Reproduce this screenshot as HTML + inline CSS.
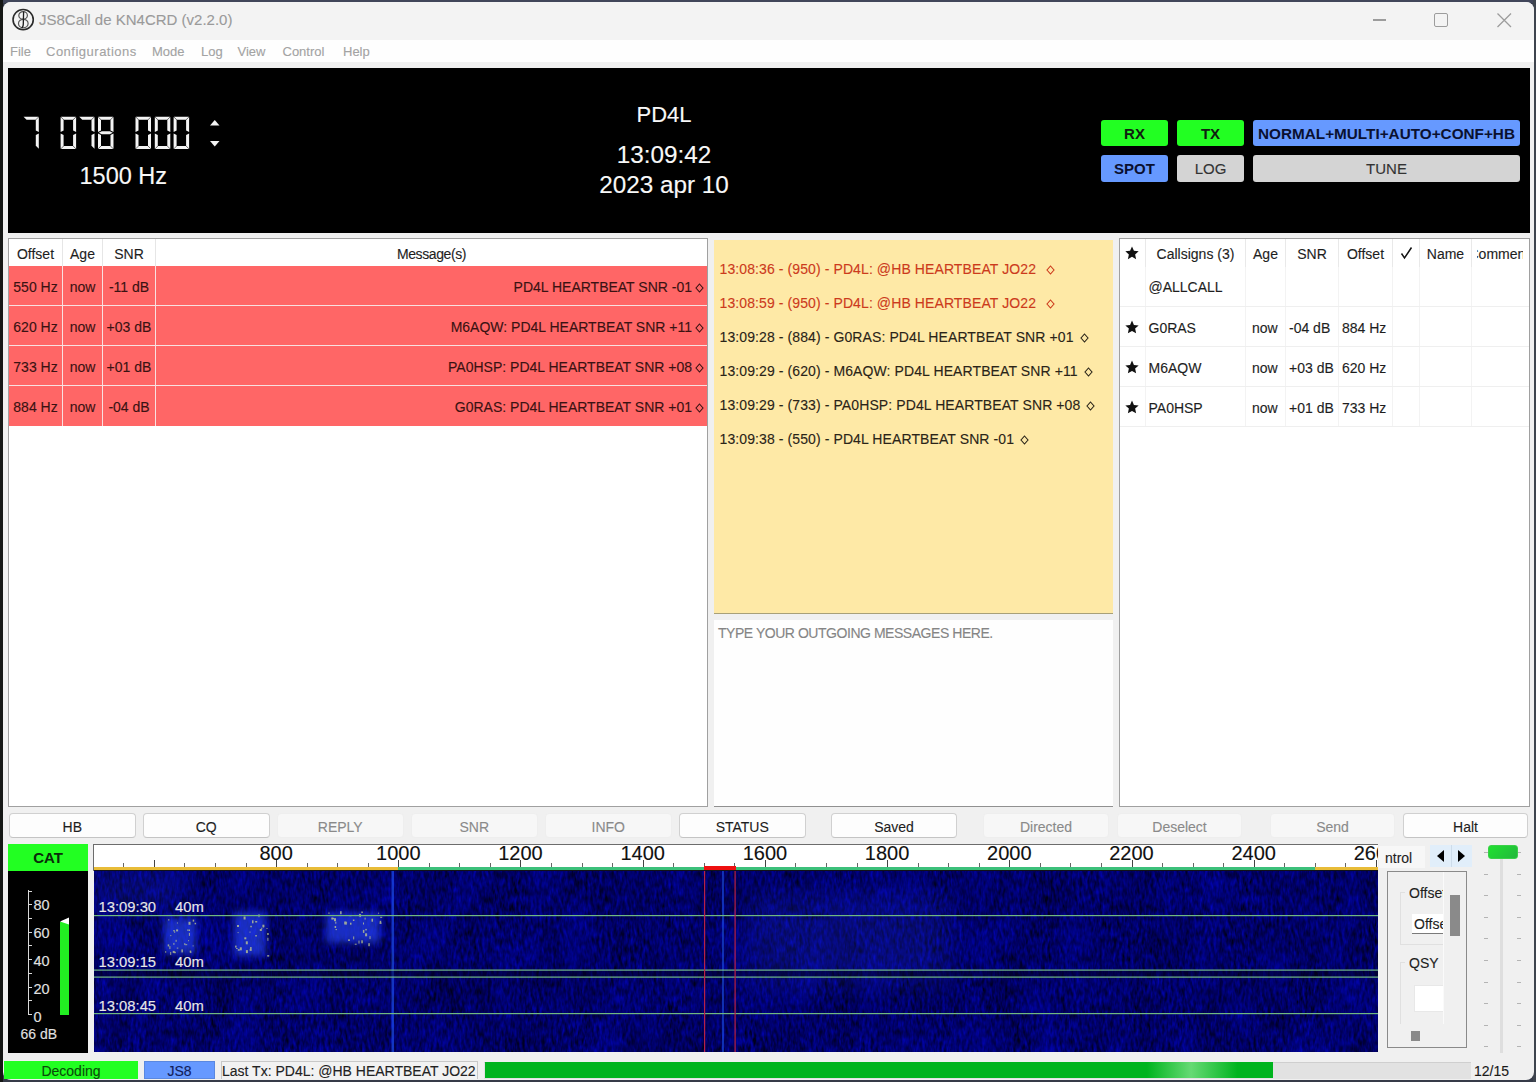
<!DOCTYPE html>
<html><head><meta charset="utf-8">
<style>
*{box-sizing:border-box;margin:0;padding:0}
html,body{width:1536px;height:1082px;overflow:hidden;background:#363b48;font-family:"Liberation Sans",sans-serif}
.a{position:absolute}
.t{position:absolute;white-space:nowrap;font-size:14px;line-height:20px;color:#1e1e1e;-webkit-text-stroke:0.12px currentColor}
</style></head><body>

<div class="a" style="left:0px;top:0px;width:1536px;height:3px;background:#41465a"></div>
<div class="a" style="left:0px;top:0px;width:3px;height:1082px;background:#151715"></div>
<div class="a" style="left:1533px;top:0px;width:3px;height:1082px;background:#3e444e"></div>
<div class="a" style="left:3px;top:2px;width:1531px;height:1078px;background:#f0f0f0;border-radius:8px;overflow:hidden">
<div class="a" style="left:0;top:0;width:1531px;height:38px;background:#f3f3f3"></div>
<div class="a" style="left:0;top:38px;width:1531px;height:22px;background:#fefefe"></div>
</div>
<svg class="a" style="left:8px;top:5px" width="30" height="30" viewBox="0 0 30 30">
<circle cx="15.15" cy="14.65" r="10.1" fill="none" stroke="#2a2a2a" stroke-width="1.6"/>
<ellipse cx="15.1" cy="10.4" rx="4.3" ry="3.7" fill="none" stroke="#555" stroke-width="1.2"/>
<ellipse cx="15.3" cy="18.6" rx="4.8" ry="4.3" fill="none" stroke="#555" stroke-width="1.2"/>
<path d="M15.6 6.6 L15.3 19 C15.2 21.5 14.8 22.5 13.6 23" fill="none" stroke="#1e1e1e" stroke-width="1.3"/>
</svg>
<div class="t" style="left:39px;top:10.27px;font-size:15px;line-height:20px;color:#9a9a9a;font-weight:400;">JS8Call de KN4CRD (v2.2.0)</div>
<div class="a" style="left:1373px;top:19px;width:13px;height:2px;background:#9c9c9c"></div>
<div class="a" style="left:1434px;top:13px;width:14px;height:14px;border:1.5px solid #9c9c9c;border-radius:2px"></div>
<svg class="a" style="left:1496px;top:12px" width="17" height="17" viewBox="0 0 17 17">
<path d="M1.5 1.5 L15 15 M15 1.5 L1.5 15" stroke="#9c9c9c" stroke-width="1.3"/></svg>
<div class="t" style="left:10px;top:42.03px;font-size:13px;line-height:20px;color:#a3a3a3;font-weight:400;">File</div>
<div class="t" style="left:46px;top:42.03px;font-size:13px;line-height:20px;color:#a3a3a3;font-weight:400;letter-spacing:0.5px">Configurations</div>
<div class="t" style="left:152px;top:42.03px;font-size:13px;line-height:20px;color:#a3a3a3;font-weight:400;">Mode</div>
<div class="t" style="left:201px;top:42.03px;font-size:13px;line-height:20px;color:#a3a3a3;font-weight:400;">Log</div>
<div class="t" style="left:237.5px;top:42.03px;font-size:13px;line-height:20px;color:#a3a3a3;font-weight:400;">View</div>
<div class="t" style="left:282.5px;top:42.03px;font-size:13px;line-height:20px;color:#a3a3a3;font-weight:400;">Control</div>
<div class="t" style="left:343px;top:42.03px;font-size:13px;line-height:20px;color:#a3a3a3;font-weight:400;">Help</div>
<div class="a" style="left:8px;top:68px;width:1522px;height:165px;background:#000"></div>
<svg class="a" style="left:0;top:0" width="240" height="200" viewBox="0 0 240 200"><g fill="#f4f4f4"><g transform="translate(23.3,116.7)"><polygon points="0.25,0.00 15.25,0.00 12.25,3.00 3.25,3.00"/><polygon points="15.50,0.25 12.50,3.25 12.50,13.85 15.50,15.35"/><polygon points="15.50,16.85 12.50,18.35 12.50,28.95 15.50,31.95"/></g><g transform="translate(60.6,116.7)"><polygon points="0.25,0.00 15.25,0.00 12.25,3.00 3.25,3.00"/><polygon points="15.50,0.25 12.50,3.25 12.50,13.85 15.50,15.35"/><polygon points="15.50,16.85 12.50,18.35 12.50,28.95 15.50,31.95"/><polygon points="0.25,32.20 15.25,32.20 12.25,29.20 3.25,29.20"/><polygon points="0.00,16.85 3.00,18.35 3.00,28.95 0.00,31.95"/><polygon points="0.00,0.25 3.00,3.25 3.00,13.85 0.00,15.35"/></g><g transform="translate(79,116.7)"><polygon points="0.25,0.00 15.25,0.00 12.25,3.00 3.25,3.00"/><polygon points="15.50,0.25 12.50,3.25 12.50,13.85 15.50,15.35"/><polygon points="15.50,16.85 12.50,18.35 12.50,28.95 15.50,31.95"/></g><g transform="translate(98,116.7)"><polygon points="0.25,0.00 15.25,0.00 12.25,3.00 3.25,3.00"/><polygon points="15.50,0.25 12.50,3.25 12.50,13.85 15.50,15.35"/><polygon points="15.50,16.85 12.50,18.35 12.50,28.95 15.50,31.95"/><polygon points="0.25,32.20 15.25,32.20 12.25,29.20 3.25,29.20"/><polygon points="0.00,16.85 3.00,18.35 3.00,28.95 0.00,31.95"/><polygon points="0.00,0.25 3.00,3.25 3.00,13.85 0.00,15.35"/><polygon points="0.75,16.10 3.75,14.60 11.75,14.60 14.75,16.10 11.75,17.60 3.75,17.60"/></g><g transform="translate(135.5,116.7)"><polygon points="0.25,0.00 15.25,0.00 12.25,3.00 3.25,3.00"/><polygon points="15.50,0.25 12.50,3.25 12.50,13.85 15.50,15.35"/><polygon points="15.50,16.85 12.50,18.35 12.50,28.95 15.50,31.95"/><polygon points="0.25,32.20 15.25,32.20 12.25,29.20 3.25,29.20"/><polygon points="0.00,16.85 3.00,18.35 3.00,28.95 0.00,31.95"/><polygon points="0.00,0.25 3.00,3.25 3.00,13.85 0.00,15.35"/></g><g transform="translate(154.8,116.7)"><polygon points="0.25,0.00 15.25,0.00 12.25,3.00 3.25,3.00"/><polygon points="15.50,0.25 12.50,3.25 12.50,13.85 15.50,15.35"/><polygon points="15.50,16.85 12.50,18.35 12.50,28.95 15.50,31.95"/><polygon points="0.25,32.20 15.25,32.20 12.25,29.20 3.25,29.20"/><polygon points="0.00,16.85 3.00,18.35 3.00,28.95 0.00,31.95"/><polygon points="0.00,0.25 3.00,3.25 3.00,13.85 0.00,15.35"/></g><g transform="translate(173.6,116.7)"><polygon points="0.25,0.00 15.25,0.00 12.25,3.00 3.25,3.00"/><polygon points="15.50,0.25 12.50,3.25 12.50,13.85 15.50,15.35"/><polygon points="15.50,16.85 12.50,18.35 12.50,28.95 15.50,31.95"/><polygon points="0.25,32.20 15.25,32.20 12.25,29.20 3.25,29.20"/><polygon points="0.00,16.85 3.00,18.35 3.00,28.95 0.00,31.95"/><polygon points="0.00,0.25 3.00,3.25 3.00,13.85 0.00,15.35"/></g><polygon points="210,125.5 219.5,125.5 214.75,120"/><polygon points="210,141 219.5,141 214.75,146.5"/></g></svg>
<div class="t" style="left:79.5px;top:166.42px;font-size:23.5px;line-height:20px;color:#f8f8f8;font-weight:400;">1500 Hz</div>
<div class="t" style="left:564px;width:200px;text-align:center;top:104.70px;font-size:22px;line-height:20px;color:#f8f8f8;font-weight:400;">PD4L</div>
<div class="t" style="left:564px;width:200px;text-align:center;top:145.24px;font-size:24.3px;line-height:20px;color:#f8f8f8;font-weight:400;">13:09:42</div>
<div class="t" style="left:564px;width:200px;text-align:center;top:174.74px;font-size:24.3px;line-height:20px;color:#f8f8f8;font-weight:400;">2023 apr 10</div>
<div class="a" style="left:1101px;top:120px;width:67px;height:26px;background:#22ff22;border-radius:3px"></div>
<div class="t" style="left:1101px;width:67px;text-align:center;top:123.77px;font-size:15px;line-height:20px;color:#102010;font-weight:700;-webkit-text-stroke:0;">RX</div>
<div class="a" style="left:1177px;top:120px;width:67px;height:26px;background:#22ff22;border-radius:3px"></div>
<div class="t" style="left:1177px;width:67px;text-align:center;top:123.77px;font-size:15px;line-height:20px;color:#102010;font-weight:700;-webkit-text-stroke:0;">TX</div>
<div class="a" style="left:1253px;top:120px;width:267px;height:26px;background:#6699ff;border-radius:3px"></div>
<div class="t" style="left:1253px;width:267px;text-align:center;top:123.78px;font-size:15.3px;line-height:20px;color:#0a1030;font-weight:700;-webkit-text-stroke:0;">NORMAL+MULTI+AUTO+CONF+HB</div>
<div class="a" style="left:1101px;top:155px;width:67px;height:27px;background:#6699ff;border-radius:3px"></div>
<div class="t" style="left:1101px;width:67px;text-align:center;top:159.27px;font-size:15px;line-height:20px;color:#0a1030;font-weight:700;-webkit-text-stroke:0;">SPOT</div>
<div class="a" style="left:1177px;top:155px;width:67px;height:27px;background:#d4d4d4;border-radius:3px"></div>
<div class="t" style="left:1177px;width:67px;text-align:center;top:159.27px;font-size:15px;line-height:20px;color:#333333;font-weight:400;">LOG</div>
<div class="a" style="left:1253px;top:155px;width:267px;height:27px;background:#d4d4d4;border-radius:3px"></div>
<div class="t" style="left:1253px;width:267px;text-align:center;top:159.27px;font-size:15px;line-height:20px;color:#333333;font-weight:400;">TUNE</div>
<div class="a" style="left:8px;top:238px;width:700px;height:569px;background:#fff;border:1px solid #a0a0a0"></div>
<div class="a" style="left:62px;top:239px;width:1px;height:27px;background:#e6e6e6"></div>
<div class="a" style="left:102px;top:239px;width:1px;height:27px;background:#e6e6e6"></div>
<div class="a" style="left:155px;top:239px;width:1px;height:27px;background:#e6e6e6"></div>
<div class="t" style="left:9px;width:53px;text-align:center;top:243.55px;font-size:14px;line-height:20px;color:#1e1e1e;font-weight:400;">Offset</div>
<div class="t" style="left:63px;width:39px;text-align:center;top:243.55px;font-size:14px;line-height:20px;color:#1e1e1e;font-weight:400;">Age</div>
<div class="t" style="left:103px;width:52px;text-align:center;top:243.55px;font-size:14px;line-height:20px;color:#1e1e1e;font-weight:400;">SNR</div>
<div class="t" style="left:156px;width:551px;text-align:center;top:243.55px;font-size:14px;line-height:20px;color:#1e1e1e;font-weight:400;letter-spacing:-0.39px">Message(s)</div>
<div class="a" style="left:9px;top:266px;width:698px;height:160px;background:#ff6666"></div>
<div class="a" style="left:9px;top:305px;width:698px;height:1px;background:#f8e0e0"></div>
<div class="a" style="left:9px;top:345px;width:698px;height:1px;background:#f8e0e0"></div>
<div class="a" style="left:9px;top:385px;width:698px;height:1px;background:#f8e0e0"></div>
<div class="a" style="left:62px;top:266px;width:1px;height:160px;background:#f8e0e0"></div>
<div class="a" style="left:102px;top:266px;width:1px;height:160px;background:#f8e0e0"></div>
<div class="a" style="left:155px;top:266px;width:1px;height:160px;background:#f8e0e0"></div>
<div class="t" style="left:9px;width:53px;text-align:center;top:277.25px;font-size:14px;line-height:20px;color:#3a1212;font-weight:400;">550 Hz</div>
<div class="t" style="left:63px;width:39px;text-align:center;top:277.25px;font-size:14px;line-height:20px;color:#3a1212;font-weight:400;">now</div>
<div class="t" style="left:103px;width:52px;text-align:center;top:277.25px;font-size:14px;line-height:20px;color:#3a1212;font-weight:400;">-11 dB</div>
<div class="t" style="right:844px;top:277.25px;font-size:14px;line-height:20px;color:#3a1212;font-weight:400;text-align:right;">PD4L HEARTBEAT SNR -01</div>
<svg class="a" style="left:694.5px;top:282.5px" width="9" height="10" viewBox="0 0 9 10"><path d="M4.5 1 L8 5 L4.5 9 L1 5 Z" fill="none" stroke="#3a1212" stroke-width="1.1"/></svg>
<div class="t" style="left:9px;width:53px;text-align:center;top:317.25px;font-size:14px;line-height:20px;color:#3a1212;font-weight:400;">620 Hz</div>
<div class="t" style="left:63px;width:39px;text-align:center;top:317.25px;font-size:14px;line-height:20px;color:#3a1212;font-weight:400;">now</div>
<div class="t" style="left:103px;width:52px;text-align:center;top:317.25px;font-size:14px;line-height:20px;color:#3a1212;font-weight:400;">+03 dB</div>
<div class="t" style="right:844px;top:317.25px;font-size:14px;line-height:20px;color:#3a1212;font-weight:400;text-align:right;">M6AQW: PD4L HEARTBEAT SNR +11</div>
<svg class="a" style="left:694.5px;top:322.5px" width="9" height="10" viewBox="0 0 9 10"><path d="M4.5 1 L8 5 L4.5 9 L1 5 Z" fill="none" stroke="#3a1212" stroke-width="1.1"/></svg>
<div class="t" style="left:9px;width:53px;text-align:center;top:357.25px;font-size:14px;line-height:20px;color:#3a1212;font-weight:400;">733 Hz</div>
<div class="t" style="left:63px;width:39px;text-align:center;top:357.25px;font-size:14px;line-height:20px;color:#3a1212;font-weight:400;">now</div>
<div class="t" style="left:103px;width:52px;text-align:center;top:357.25px;font-size:14px;line-height:20px;color:#3a1212;font-weight:400;">+01 dB</div>
<div class="t" style="right:844px;top:357.25px;font-size:14px;line-height:20px;color:#3a1212;font-weight:400;text-align:right;">PA0HSP: PD4L HEARTBEAT SNR +08</div>
<svg class="a" style="left:694.5px;top:362.5px" width="9" height="10" viewBox="0 0 9 10"><path d="M4.5 1 L8 5 L4.5 9 L1 5 Z" fill="none" stroke="#3a1212" stroke-width="1.1"/></svg>
<div class="t" style="left:9px;width:53px;text-align:center;top:397.25px;font-size:14px;line-height:20px;color:#3a1212;font-weight:400;">884 Hz</div>
<div class="t" style="left:63px;width:39px;text-align:center;top:397.25px;font-size:14px;line-height:20px;color:#3a1212;font-weight:400;">now</div>
<div class="t" style="left:103px;width:52px;text-align:center;top:397.25px;font-size:14px;line-height:20px;color:#3a1212;font-weight:400;">-04 dB</div>
<div class="t" style="right:844px;top:397.25px;font-size:14px;line-height:20px;color:#3a1212;font-weight:400;text-align:right;">G0RAS: PD4L HEARTBEAT SNR +01</div>
<svg class="a" style="left:694.5px;top:402.5px" width="9" height="10" viewBox="0 0 9 10"><path d="M4.5 1 L8 5 L4.5 9 L1 5 Z" fill="none" stroke="#3a1212" stroke-width="1.1"/></svg>
<div class="a" style="left:714px;top:240px;width:399px;height:374px;background:#fee9a6;border-bottom:1px solid #a8a078"></div>
<div class="a" style="left:714px;top:620px;width:399px;height:187px;background:#fefefe;border-bottom:1px solid #909090"></div>
<div class="t" style="left:719.5px;top:258.65px;font-size:14px;line-height:20px;color:#cc3a1c;font-weight:400;letter-spacing:0.1px">13:08:36 - (950) - PD4L: @HB HEARTBEAT JO22<svg style="display:inline-block;vertical-align:-1px;margin-left:10px" width="9" height="10" viewBox="0 0 9 10"><path d="M4.5 1 L8 5 L4.5 9 L1 5 Z" fill="none" stroke="#cc3a1c" stroke-width="1.1"/></svg></div>
<div class="t" style="left:719.5px;top:292.65px;font-size:14px;line-height:20px;color:#cc3a1c;font-weight:400;letter-spacing:0.1px">13:08:59 - (950) - PD4L: @HB HEARTBEAT JO22<svg style="display:inline-block;vertical-align:-1px;margin-left:10px" width="9" height="10" viewBox="0 0 9 10"><path d="M4.5 1 L8 5 L4.5 9 L1 5 Z" fill="none" stroke="#cc3a1c" stroke-width="1.1"/></svg></div>
<div class="t" style="left:719.5px;top:326.65px;font-size:14px;line-height:20px;color:#2a2418;font-weight:400;letter-spacing:0.1px">13:09:28 - (884) - G0RAS: PD4L HEARTBEAT SNR +01<svg style="display:inline-block;vertical-align:-1px;margin-left:6px" width="9" height="10" viewBox="0 0 9 10"><path d="M4.5 1 L8 5 L4.5 9 L1 5 Z" fill="none" stroke="#2a2418" stroke-width="1.1"/></svg></div>
<div class="t" style="left:719.5px;top:360.65px;font-size:14px;line-height:20px;color:#2a2418;font-weight:400;letter-spacing:0.1px">13:09:29 - (620) - M6AQW: PD4L HEARTBEAT SNR +11<svg style="display:inline-block;vertical-align:-1px;margin-left:6px" width="9" height="10" viewBox="0 0 9 10"><path d="M4.5 1 L8 5 L4.5 9 L1 5 Z" fill="none" stroke="#2a2418" stroke-width="1.1"/></svg></div>
<div class="t" style="left:719.5px;top:394.65px;font-size:14px;line-height:20px;color:#2a2418;font-weight:400;letter-spacing:0.1px">13:09:29 - (733) - PA0HSP: PD4L HEARTBEAT SNR +08<svg style="display:inline-block;vertical-align:-1px;margin-left:6px" width="9" height="10" viewBox="0 0 9 10"><path d="M4.5 1 L8 5 L4.5 9 L1 5 Z" fill="none" stroke="#2a2418" stroke-width="1.1"/></svg></div>
<div class="t" style="left:719.5px;top:428.65px;font-size:14px;line-height:20px;color:#2a2418;font-weight:400;letter-spacing:0.1px">13:09:38 - (550) - PD4L HEARTBEAT SNR -01<svg style="display:inline-block;vertical-align:-1px;margin-left:6px" width="9" height="10" viewBox="0 0 9 10"><path d="M4.5 1 L8 5 L4.5 9 L1 5 Z" fill="none" stroke="#2a2418" stroke-width="1.1"/></svg></div>
<div class="t" style="left:718px;top:622.85px;font-size:14px;line-height:20px;color:#858585;font-weight:400;letter-spacing:-0.46px">TYPE YOUR OUTGOING MESSAGES HERE.</div>
<div class="a" style="left:1119px;top:238px;width:411px;height:569px;background:#fff;border:1px solid #a0a0a0"></div>
<div class="a" style="left:1145px;top:239px;width:1px;height:28px;background:#e9e9e9"></div>
<div class="a" style="left:1145px;top:267px;width:1px;height:160px;background:#f3f3f3"></div>
<div class="a" style="left:1245px;top:239px;width:1px;height:28px;background:#e9e9e9"></div>
<div class="a" style="left:1245px;top:267px;width:1px;height:160px;background:#f3f3f3"></div>
<div class="a" style="left:1285px;top:239px;width:1px;height:28px;background:#e9e9e9"></div>
<div class="a" style="left:1285px;top:267px;width:1px;height:160px;background:#f3f3f3"></div>
<div class="a" style="left:1338px;top:239px;width:1px;height:28px;background:#e9e9e9"></div>
<div class="a" style="left:1338px;top:267px;width:1px;height:160px;background:#f3f3f3"></div>
<div class="a" style="left:1392px;top:239px;width:1px;height:28px;background:#e9e9e9"></div>
<div class="a" style="left:1392px;top:267px;width:1px;height:160px;background:#f3f3f3"></div>
<div class="a" style="left:1419px;top:239px;width:1px;height:28px;background:#e9e9e9"></div>
<div class="a" style="left:1419px;top:267px;width:1px;height:160px;background:#f3f3f3"></div>
<div class="a" style="left:1471px;top:239px;width:1px;height:28px;background:#e9e9e9"></div>
<div class="a" style="left:1471px;top:267px;width:1px;height:160px;background:#f3f3f3"></div>
<div class="a" style="left:1120px;top:306px;width:409px;height:1px;background:#efefef"></div>
<div class="a" style="left:1120px;top:346px;width:409px;height:1px;background:#efefef"></div>
<div class="a" style="left:1120px;top:386px;width:409px;height:1px;background:#efefef"></div>
<div class="a" style="left:1120px;top:426px;width:409px;height:1px;background:#efefef"></div>
<svg class="a" style="left:0;top:0;overflow:visible" width="1" height="1"><polygon points="1132.00,246.50 1133.93,250.84 1138.66,251.34 1135.13,254.52 1136.11,259.16 1132.00,256.79 1127.89,259.16 1128.87,254.52 1125.34,251.34 1130.07,250.84" fill="#111"/></svg>
<div class="t" style="left:1146px;width:99px;text-align:center;top:243.55px;font-size:14px;line-height:20px;color:#1e1e1e;font-weight:400;">Callsigns (3)</div>
<div class="t" style="left:1246px;width:39px;text-align:center;top:243.55px;font-size:14px;line-height:20px;color:#1e1e1e;font-weight:400;">Age</div>
<div class="t" style="left:1286px;width:52px;text-align:center;top:243.55px;font-size:14px;line-height:20px;color:#1e1e1e;font-weight:400;">SNR</div>
<div class="t" style="left:1339px;width:53px;text-align:center;top:243.55px;font-size:14px;line-height:20px;color:#1e1e1e;font-weight:400;">Offset</div>
<svg class="a" style="left:1400px;top:246px" width="13" height="14" viewBox="0 0 13 14"><path d="M1.5 7.5 L4.5 12 L11.5 1.5" fill="none" stroke="#111" stroke-width="1.5"/></svg>
<div class="t" style="left:1420px;width:51px;text-align:center;top:243.55px;font-size:14px;line-height:20px;color:#1e1e1e;font-weight:400;">Name</div>
<div class="a" style="left:1476.5px;top:239px;width:46.5px;height:28px;overflow:hidden">
<div class="t" style="left:-8px;top:4.55px;">Comment</div>
</div>
<div class="t" style="left:1148.5px;top:277.25px;font-size:14px;line-height:20px;color:#1e1e1e;font-weight:400;">@ALLCALL</div>
<svg class="a" style="left:0;top:0;overflow:visible" width="1" height="1"><polygon points="1132.00,320.60 1133.93,324.94 1138.66,325.44 1135.13,328.62 1136.11,333.26 1132.00,330.89 1127.89,333.26 1128.87,328.62 1125.34,325.44 1130.07,324.94" fill="#111"/></svg>
<div class="t" style="left:1148.5px;top:317.85px;font-size:14px;line-height:20px;color:#1e1e1e;font-weight:400;">G0RAS</div>
<div class="t" style="left:1252px;top:317.85px;font-size:14px;line-height:20px;color:#1e1e1e;font-weight:400;">now</div>
<div class="t" style="left:1289px;top:317.85px;font-size:14px;line-height:20px;color:#1e1e1e;font-weight:400;">-04 dB</div>
<div class="t" style="left:1342px;top:317.85px;font-size:14px;line-height:20px;color:#1e1e1e;font-weight:400;">884 Hz</div>
<svg class="a" style="left:0;top:0;overflow:visible" width="1" height="1"><polygon points="1132.00,360.60 1133.93,364.94 1138.66,365.44 1135.13,368.62 1136.11,373.26 1132.00,370.89 1127.89,373.26 1128.87,368.62 1125.34,365.44 1130.07,364.94" fill="#111"/></svg>
<div class="t" style="left:1148.5px;top:357.85px;font-size:14px;line-height:20px;color:#1e1e1e;font-weight:400;">M6AQW</div>
<div class="t" style="left:1252px;top:357.85px;font-size:14px;line-height:20px;color:#1e1e1e;font-weight:400;">now</div>
<div class="t" style="left:1289px;top:357.85px;font-size:14px;line-height:20px;color:#1e1e1e;font-weight:400;">+03 dB</div>
<div class="t" style="left:1342px;top:357.85px;font-size:14px;line-height:20px;color:#1e1e1e;font-weight:400;">620 Hz</div>
<svg class="a" style="left:0;top:0;overflow:visible" width="1" height="1"><polygon points="1132.00,400.60 1133.93,404.94 1138.66,405.44 1135.13,408.62 1136.11,413.26 1132.00,410.89 1127.89,413.26 1128.87,408.62 1125.34,405.44 1130.07,404.94" fill="#111"/></svg>
<div class="t" style="left:1148.5px;top:397.85px;font-size:14px;line-height:20px;color:#1e1e1e;font-weight:400;">PA0HSP</div>
<div class="t" style="left:1252px;top:397.85px;font-size:14px;line-height:20px;color:#1e1e1e;font-weight:400;">now</div>
<div class="t" style="left:1289px;top:397.85px;font-size:14px;line-height:20px;color:#1e1e1e;font-weight:400;">+01 dB</div>
<div class="t" style="left:1342px;top:397.85px;font-size:14px;line-height:20px;color:#1e1e1e;font-weight:400;">733 Hz</div>
<div class="a" style="left:9px;top:813px;width:126.5px;height:25px;background:#fdfdfd;border:1px solid #d0d0d0;border-bottom-color:#c4c4c4;border-radius:4px"></div>
<div class="t" style="left:9px;width:126.5px;text-align:center;top:816.85px;font-size:14px;line-height:20px;color:#1e1e1e;font-weight:400;">HB</div>
<div class="a" style="left:143px;top:813px;width:126.5px;height:25px;background:#fdfdfd;border:1px solid #d0d0d0;border-bottom-color:#c4c4c4;border-radius:4px"></div>
<div class="t" style="left:143px;width:126.5px;text-align:center;top:816.85px;font-size:14px;line-height:20px;color:#1e1e1e;font-weight:400;">CQ</div>
<div class="a" style="left:277px;top:813px;width:126.5px;height:25px;background:#f7f7f7;border:1px solid #eeeeee;border-radius:4px"></div>
<div class="t" style="left:277px;width:126.5px;text-align:center;top:816.75px;font-size:14px;line-height:20px;color:#8a8a8a;font-weight:400;">REPLY</div>
<div class="a" style="left:411px;top:813px;width:126.5px;height:25px;background:#f7f7f7;border:1px solid #eeeeee;border-radius:4px"></div>
<div class="t" style="left:411px;width:126.5px;text-align:center;top:816.75px;font-size:14px;line-height:20px;color:#8a8a8a;font-weight:400;">SNR</div>
<div class="a" style="left:545px;top:813px;width:126.5px;height:25px;background:#f7f7f7;border:1px solid #eeeeee;border-radius:4px"></div>
<div class="t" style="left:545px;width:126.5px;text-align:center;top:816.75px;font-size:14px;line-height:20px;color:#8a8a8a;font-weight:400;">INFO</div>
<div class="a" style="left:679px;top:813px;width:126.5px;height:25px;background:#fdfdfd;border:1px solid #d0d0d0;border-bottom-color:#c4c4c4;border-radius:4px"></div>
<div class="t" style="left:679px;width:126.5px;text-align:center;top:816.85px;font-size:14px;line-height:20px;color:#1e1e1e;font-weight:400;">STATUS</div>
<div class="a" style="left:831px;top:813px;width:126px;height:25px;background:#fdfdfd;border:1px solid #d0d0d0;border-bottom-color:#c4c4c4;border-radius:4px"></div>
<div class="t" style="left:831px;width:126px;text-align:center;top:816.85px;font-size:14px;line-height:20px;color:#1e1e1e;font-weight:400;">Saved</div>
<div class="a" style="left:983px;top:813px;width:126px;height:25px;background:#f7f7f7;border:1px solid #eeeeee;border-radius:4px"></div>
<div class="t" style="left:983px;width:126px;text-align:center;top:816.75px;font-size:14px;line-height:20px;color:#8a8a8a;font-weight:400;">Directed</div>
<div class="a" style="left:1117px;top:813px;width:125px;height:25px;background:#f7f7f7;border:1px solid #eeeeee;border-radius:4px"></div>
<div class="t" style="left:1117px;width:125px;text-align:center;top:816.75px;font-size:14px;line-height:20px;color:#8a8a8a;font-weight:400;">Deselect</div>
<div class="a" style="left:1270px;top:813px;width:125px;height:25px;background:#f7f7f7;border:1px solid #eeeeee;border-radius:4px"></div>
<div class="t" style="left:1270px;width:125px;text-align:center;top:816.75px;font-size:14px;line-height:20px;color:#8a8a8a;font-weight:400;">Send</div>
<div class="a" style="left:1403px;top:813px;width:125px;height:25px;background:#fdfdfd;border:1px solid #d0d0d0;border-bottom-color:#c4c4c4;border-radius:4px"></div>
<div class="t" style="left:1403px;width:125px;text-align:center;top:816.85px;font-size:14px;line-height:20px;color:#1e1e1e;font-weight:400;">Halt</div>
<div class="a" style="left:8px;top:844px;width:80px;height:27px;background:#22ff22"></div>
<div class="t" style="left:8px;width:80px;text-align:center;top:848.27px;font-size:15px;line-height:20px;color:#0a2a0a;font-weight:700;-webkit-text-stroke:0;">CAT</div>
<div class="a" style="left:8px;top:871px;width:80px;height:182px;background:#000"></div>
<div class="a" style="left:28px;top:890px;width:1px;height:125px;background:#d8d8d8"></div>
<div class="a" style="left:28px;top:1014px;width:4px;height:1px;background:#d8d8d8"></div>
<div class="a" style="left:28px;top:1000px;width:4px;height:1px;background:#d8d8d8"></div>
<div class="a" style="left:28px;top:987px;width:4px;height:1px;background:#d8d8d8"></div>
<div class="a" style="left:28px;top:973px;width:4px;height:1px;background:#d8d8d8"></div>
<div class="a" style="left:28px;top:959px;width:4px;height:1px;background:#d8d8d8"></div>
<div class="a" style="left:28px;top:945px;width:4px;height:1px;background:#d8d8d8"></div>
<div class="a" style="left:28px;top:932px;width:4px;height:1px;background:#d8d8d8"></div>
<div class="a" style="left:28px;top:918px;width:4px;height:1px;background:#d8d8d8"></div>
<div class="a" style="left:28px;top:904px;width:4px;height:1px;background:#d8d8d8"></div>
<div class="a" style="left:28px;top:891px;width:4px;height:1px;background:#d8d8d8"></div>
<div class="t" style="left:33.5px;top:1007.06px;font-size:14.5px;line-height:20px;color:#e0e0e0;font-weight:400;">0</div>
<div class="t" style="left:33.5px;top:979.16px;font-size:14.5px;line-height:20px;color:#e0e0e0;font-weight:400;">20</div>
<div class="t" style="left:33.5px;top:951.26px;font-size:14.5px;line-height:20px;color:#e0e0e0;font-weight:400;">40</div>
<div class="t" style="left:33.5px;top:923.36px;font-size:14.5px;line-height:20px;color:#e0e0e0;font-weight:400;">60</div>
<div class="t" style="left:33.5px;top:895.46px;font-size:14.5px;line-height:20px;color:#e0e0e0;font-weight:400;">80</div>
<div class="a" style="left:60px;top:922px;width:9px;height:93px;background:#22ee22"></div>
<svg class="a" style="left:58px;top:917px" width="12" height="8"><polygon points="2,4.5 11,0.5 11,7.5" fill="#fff"/></svg>
<div class="t" style="left:20.5px;top:1024.25px;font-size:14px;line-height:20px;color:#e0e0e0;font-weight:400;">66 dB</div>
<div class="a" style="left:93px;top:844px;width:1285px;height:27px;background:#fff;border-top:1px solid #6c6c6c;border-left:1px solid #6c6c6c"></div>
<div class="a" style="left:123px;top:863px;width:1px;height:4px;background:#666"></div>
<div class="a" style="left:154px;top:860px;width:1px;height:7px;background:#444"></div>
<div class="a" style="left:184px;top:863px;width:1px;height:4px;background:#666"></div>
<div class="a" style="left:215px;top:863px;width:1px;height:4px;background:#666"></div>
<div class="a" style="left:246px;top:863px;width:1px;height:4px;background:#666"></div>
<div class="a" style="left:276px;top:860px;width:1px;height:7px;background:#444"></div>
<div class="a" style="left:307px;top:863px;width:1px;height:4px;background:#666"></div>
<div class="a" style="left:337px;top:863px;width:1px;height:4px;background:#666"></div>
<div class="a" style="left:368px;top:863px;width:1px;height:4px;background:#666"></div>
<div class="a" style="left:398px;top:860px;width:1px;height:7px;background:#444"></div>
<div class="a" style="left:429px;top:863px;width:1px;height:4px;background:#666"></div>
<div class="a" style="left:459px;top:863px;width:1px;height:4px;background:#666"></div>
<div class="a" style="left:490px;top:863px;width:1px;height:4px;background:#666"></div>
<div class="a" style="left:520px;top:860px;width:1px;height:7px;background:#444"></div>
<div class="a" style="left:551px;top:863px;width:1px;height:4px;background:#666"></div>
<div class="a" style="left:582px;top:863px;width:1px;height:4px;background:#666"></div>
<div class="a" style="left:612px;top:863px;width:1px;height:4px;background:#666"></div>
<div class="a" style="left:643px;top:860px;width:1px;height:7px;background:#444"></div>
<div class="a" style="left:673px;top:863px;width:1px;height:4px;background:#666"></div>
<div class="a" style="left:704px;top:863px;width:1px;height:4px;background:#666"></div>
<div class="a" style="left:734px;top:863px;width:1px;height:4px;background:#666"></div>
<div class="a" style="left:765px;top:860px;width:1px;height:7px;background:#444"></div>
<div class="a" style="left:795px;top:863px;width:1px;height:4px;background:#666"></div>
<div class="a" style="left:826px;top:863px;width:1px;height:4px;background:#666"></div>
<div class="a" style="left:857px;top:863px;width:1px;height:4px;background:#666"></div>
<div class="a" style="left:887px;top:860px;width:1px;height:7px;background:#444"></div>
<div class="a" style="left:918px;top:863px;width:1px;height:4px;background:#666"></div>
<div class="a" style="left:948px;top:863px;width:1px;height:4px;background:#666"></div>
<div class="a" style="left:979px;top:863px;width:1px;height:4px;background:#666"></div>
<div class="a" style="left:1009px;top:860px;width:1px;height:7px;background:#444"></div>
<div class="a" style="left:1040px;top:863px;width:1px;height:4px;background:#666"></div>
<div class="a" style="left:1070px;top:863px;width:1px;height:4px;background:#666"></div>
<div class="a" style="left:1101px;top:863px;width:1px;height:4px;background:#666"></div>
<div class="a" style="left:1132px;top:860px;width:1px;height:7px;background:#444"></div>
<div class="a" style="left:1162px;top:863px;width:1px;height:4px;background:#666"></div>
<div class="a" style="left:1193px;top:863px;width:1px;height:4px;background:#666"></div>
<div class="a" style="left:1223px;top:863px;width:1px;height:4px;background:#666"></div>
<div class="a" style="left:1254px;top:860px;width:1px;height:7px;background:#444"></div>
<div class="a" style="left:1284px;top:863px;width:1px;height:4px;background:#666"></div>
<div class="a" style="left:1315px;top:863px;width:1px;height:4px;background:#666"></div>
<div class="a" style="left:1345px;top:863px;width:1px;height:4px;background:#666"></div>
<div class="a" style="left:1376px;top:860px;width:1px;height:7px;background:#444"></div>
<div class="a" style="left:94px;top:845px;width:1284px;height:22px;overflow:hidden">
<div class="t" style="left:142.1px;width:80px;text-align:center;top:-3px;font-size:20px;line-height:22px;color:#111">800</div>
<div class="t" style="left:264.3px;width:80px;text-align:center;top:-3px;font-size:20px;line-height:22px;color:#111">1000</div>
<div class="t" style="left:386.5px;width:80px;text-align:center;top:-3px;font-size:20px;line-height:22px;color:#111">1200</div>
<div class="t" style="left:508.7px;width:80px;text-align:center;top:-3px;font-size:20px;line-height:22px;color:#111">1400</div>
<div class="t" style="left:630.9px;width:80px;text-align:center;top:-3px;font-size:20px;line-height:22px;color:#111">1600</div>
<div class="t" style="left:753.1px;width:80px;text-align:center;top:-3px;font-size:20px;line-height:22px;color:#111">1800</div>
<div class="t" style="left:875.3px;width:80px;text-align:center;top:-3px;font-size:20px;line-height:22px;color:#111">2000</div>
<div class="t" style="left:997.5px;width:80px;text-align:center;top:-3px;font-size:20px;line-height:22px;color:#111">2200</div>
<div class="t" style="left:1119.7px;width:80px;text-align:center;top:-3px;font-size:20px;line-height:22px;color:#111">2400</div>
<div class="t" style="left:1241.9px;width:80px;text-align:center;top:-3px;font-size:20px;line-height:22px;color:#111">2600</div>
</div>
<div class="a" style="left:94px;top:867px;width:304px;height:3px;background:#e8bc38"></div>
<div class="a" style="left:398px;top:867px;width:917px;height:3px;background:#3cc07a"></div>
<div class="a" style="left:1315px;top:867px;width:63px;height:3px;background:#e8bc38"></div>
<div class="a" style="left:704px;top:866px;width:32px;height:4px;background:#ee1010"></div>
<div class="a" style="left:94px;top:870px;width:1284px;height:1px;background:#101018"></div>
<svg class="a" style="left:94px;top:871px" width="1284" height="181" viewBox="0 0 1284 181">
<defs>
<filter id="nz" x="0" y="0" width="100%" height="100%" color-interpolation-filters="sRGB">
<feTurbulence type="fractalNoise" baseFrequency="0.35 0.12" numOctaves="2" seed="7" result="n1"/>
<feTurbulence type="fractalNoise" baseFrequency="0.03 0.02" numOctaves="2" seed="3" result="n2"/>
<feComposite in="n1" in2="n2" operator="arithmetic" k1="0" k2="0.85" k3="0.35" k4="-0.1" result="n"/>
<feColorMatrix in="n" type="matrix" values="0.02 0 0 0 -0.01  0.03 0 0 0 -0.01  0.75 0 0 0 0.11  0 0 0 0 1"/>
</filter>
<filter id="bl" x="-50%" y="-50%" width="200%" height="200%"><feGaussianBlur stdDeviation="3.5"/></filter><filter id="bl2" x="-50%" y="-50%" width="200%" height="200%"><feGaussianBlur stdDeviation="14"/></filter>
</defs>
<rect width="1284" height="181" fill="#030888"/>
<rect width="1284" height="181" filter="url(#nz)"/>
<g filter="url(#bl)" fill="#2a4cff" opacity="0.6">
<rect x="70" y="47" width="32" height="36"/>
<rect x="140" y="41" width="32" height="44"/>
<rect x="232" y="42" width="54" height="30"/>
</g>
<g filter="url(#bl2)" fill="#3050ff" opacity="0.13">
<rect x="655" y="25" width="200" height="90"/>
<rect x="0" y="0" width="90" height="40"/>
</g>
<rect x="297.5" y="0" width="2.5" height="181" fill="#2058ff" opacity="0.6"/>
<g fill="#c8d090" opacity="0.75"><rect x="91.2" y="73.2" width="2" height="1"/><rect x="98.6" y="74.4" width="1" height="1"/><rect x="100.6" y="51.8" width="1.5" height="1.5"/><rect x="82.9" y="51.5" width="1" height="1"/><rect x="94.9" y="61.9" width="1" height="3"/><rect x="75.4" y="75.1" width="1" height="3"/><rect x="74.3" y="48.1" width="1" height="1.5"/><rect x="96.3" y="80.6" width="1" height="1.5"/><rect x="79.8" y="80.7" width="2" height="1.5"/><rect x="76.2" y="80.9" width="1" height="3"/><rect x="80.2" y="60.3" width="1" height="1.5"/><rect x="79.0" y="59.3" width="2" height="1"/><rect x="90.3" y="72.1" width="1" height="2"/><rect x="82.1" y="58.4" width="2" height="2"/><rect x="76.3" y="64.1" width="1" height="1"/><rect x="78.7" y="79.9" width="2" height="2"/><rect x="98.7" y="48.6" width="1.5" height="2"/><rect x="82.8" y="76.6" width="1.5" height="1"/><rect x="94.1" y="69.2" width="1" height="1"/><rect x="95.7" y="79.6" width="1.5" height="2"/><rect x="87.4" y="78.4" width="1.5" height="3"/><rect x="73.7" y="73.4" width="1.5" height="2"/><rect x="71.2" y="80.2" width="1" height="1.5"/><rect x="81.6" y="68.8" width="1" height="2"/><rect x="79.4" y="71.9" width="1" height="2"/><rect x="93.3" y="58.4" width="1" height="1.5"/><rect x="94.5" y="58.5" width="1.5" height="1.5"/><rect x="94.5" y="50.8" width="2" height="3"/><rect x="141.1" y="74.6" width="1.5" height="2"/><rect x="155.5" y="60.6" width="1" height="1"/><rect x="167.3" y="56.7" width="1" height="1.5"/><rect x="173.4" y="66.8" width="1" height="3"/><rect x="143.6" y="61.1" width="1" height="1"/><rect x="168.7" y="55.0" width="1.5" height="1.5"/><rect x="173.2" y="62.0" width="1.5" height="2"/><rect x="156.3" y="54.8" width="1.5" height="1.5"/><rect x="143.8" y="78.2" width="2" height="1.5"/><rect x="161.3" y="64.0" width="1.5" height="1.5"/><rect x="143.0" y="54.0" width="2" height="2"/><rect x="142.1" y="77.0" width="1.5" height="1"/><rect x="165.8" y="58.0" width="2" height="2"/><rect x="168.4" y="53.7" width="2" height="2"/><rect x="172.5" y="57.0" width="1" height="1"/><rect x="156.1" y="76.0" width="1.5" height="2"/><rect x="155.7" y="77.9" width="2" height="2"/><rect x="151.8" y="70.3" width="2" height="3"/><rect x="151.9" y="79.1" width="2" height="3"/><rect x="173.2" y="84.1" width="2" height="1.5"/><rect x="158.0" y="49.3" width="1.5" height="3"/><rect x="149.6" y="45.5" width="2" height="3"/><rect x="145.8" y="76.3" width="2" height="3"/><rect x="150.3" y="66.3" width="2" height="2"/><rect x="164.5" y="43.2" width="1" height="3"/><rect x="161.2" y="50.0" width="2" height="1.5"/><rect x="267.3" y="40.5" width="1.5" height="1.5"/><rect x="241.3" y="50.7" width="1" height="2"/><rect x="286.2" y="45.8" width="2" height="1"/><rect x="255.3" y="44.2" width="2" height="1"/><rect x="265.0" y="42.9" width="1.5" height="1"/><rect x="251.6" y="51.4" width="1.5" height="1"/><rect x="270.6" y="46.6" width="1" height="2"/><rect x="237.3" y="46.5" width="1.5" height="2"/><rect x="285.7" y="49.8" width="1.5" height="3"/><rect x="277.5" y="47.7" width="1.5" height="3"/><rect x="240.0" y="47.2" width="2" height="3"/><rect x="285.6" y="51.6" width="2" height="1"/><rect x="251.7" y="50.7" width="1" height="3"/><rect x="238.0" y="46.8" width="2" height="1.5"/><rect x="250.2" y="50.5" width="2" height="3"/><rect x="256.0" y="51.7" width="1.5" height="2"/><rect x="258.9" y="48.5" width="1.5" height="1.5"/><rect x="265.4" y="43.1" width="1.5" height="3"/><rect x="246.1" y="40.2" width="1.5" height="3"/><rect x="284.1" y="41.7" width="1" height="1"/><rect x="269.0" y="51.5" width="1" height="2"/><rect x="234.2" y="41.6" width="1.5" height="1"/><rect x="259.2" y="65.4" width="1" height="3"/><rect x="271.3" y="57.9" width="1.5" height="1.5"/><rect x="268.9" y="58.9" width="1.5" height="3"/><rect x="260.7" y="72.7" width="2" height="1"/><rect x="240.6" y="55.0" width="1.5" height="2"/><rect x="264.5" y="69.6" width="1" height="3"/><rect x="254.0" y="68.4" width="2" height="1.5"/><rect x="241.5" y="58.1" width="1.5" height="1"/><rect x="275.5" y="65.1" width="1" height="3"/><rect x="271.1" y="62.3" width="2" height="3"/><rect x="274.3" y="72.2" width="1.5" height="3"/><rect x="267.3" y="69.3" width="1.5" height="3"/></g>
<rect x="628" y="0" width="2" height="181" fill="#1a50e8" opacity="0.6"/>
<rect x="0" y="44" width="1284" height="1.2" fill="#70b880"/>
<rect x="0" y="100" width="1284" height="5.5" fill="#000020" opacity="0.45"/>
<rect x="0" y="98.5" width="1284" height="1.2" fill="#70b880"/>
<rect x="0" y="105.5" width="1284" height="1.2" fill="#70b880"/>
<rect x="0" y="142" width="1284" height="1.2" fill="#70b880"/>
<rect x="610" y="0" width="1.2" height="181" fill="#b82048"/>
<rect x="640.5" y="0" width="1.2" height="181" fill="#b82048"/>
</svg>
<div class="t" style="left:98.5px;top:897.47px;font-size:14.8px;line-height:20px;color:#e8e8e8;font-weight:400;">13:09:30</div>
<div class="t" style="left:175px;top:897.47px;font-size:14.8px;line-height:20px;color:#e8e8e8;font-weight:400;">40m</div>
<div class="t" style="left:98.5px;top:952.07px;font-size:14.8px;line-height:20px;color:#e8e8e8;font-weight:400;">13:09:15</div>
<div class="t" style="left:175px;top:952.07px;font-size:14.8px;line-height:20px;color:#e8e8e8;font-weight:400;">40m</div>
<div class="t" style="left:98.5px;top:995.87px;font-size:14.8px;line-height:20px;color:#e8e8e8;font-weight:400;">13:08:45</div>
<div class="t" style="left:175px;top:995.87px;font-size:14.8px;line-height:20px;color:#e8e8e8;font-weight:400;">40m</div>
<div class="a" style="left:1379px;top:846px;width:46px;height:22px;background:#f7f7f7"></div>
<div class="t" style="left:1385px;top:847.75px;font-size:14px;line-height:20px;color:#1e1e1e;font-weight:400;">ntrol</div>
<div class="a" style="left:1430px;top:845px;width:21px;height:22px;background:#e1eefa"></div>
<div class="a" style="left:1451px;top:845px;width:21px;height:22px;background:#e1eefa;border-left:1px solid #cddcea"></div>
<svg class="a" style="left:1430px;top:845px" width="42" height="22"><polygon points="14,5 14,17 7,11" fill="#000"/><polygon points="28,5 28,17 35,11" fill="#000"/></svg>
<div class="a" style="left:1387px;top:871px;width:80px;height:177px;background:#f0f0f0;border:1px solid #8a8a8a"></div>
<div class="a" style="left:1444px;top:872px;width:22px;height:152px;background:#f0f0f0"></div>
<div class="a" style="left:1400px;top:892px;width:44px;height:53px;border:1px solid #e0e0e0;border-right:none"></div>
<div class="a" style="left:1405px;top:885px;width:39px;height:17px;background:#f0f0f0"></div>
<div class="a" style="left:1412px;top:914px;width:32px;height:20px;background:#fff;border-bottom:1px solid #7a7a7a;overflow:hidden"></div>
<div class="a" style="left:1412px;top:914px;width:32px;height:20px;overflow:hidden"><div class="t" style="left:2px;top:0px">Offset</div></div>
<div class="a" style="left:1405px;top:880px;width:38px;height:26px;overflow:hidden;background:#f0f0f0"><div class="t" style="left:4px;top:2.75px">Offset</div></div>
<div class="a" style="left:1450px;top:895px;width:10px;height:41px;background:#8a8a8a"></div>
<div class="a" style="left:1400px;top:962px;width:44px;height:62px;border:1px solid #e0e0e0;border-right:none;border-bottom:none"></div>
<div class="a" style="left:1405px;top:953px;width:39px;height:19px;background:#f0f0f0"></div>
<div class="t" style="left:1409px;top:953.25px;font-size:14px;line-height:20px;color:#1e1e1e;font-weight:400;">QSY</div>
<div class="a" style="left:1414px;top:985px;width:30px;height:27px;background:#fff;border:1px solid #e8e8e8;border-right:none"></div>
<div class="a" style="left:1388px;top:1024px;width:78px;height:23px;background:#f0f0f0"></div>
<div class="a" style="left:1411px;top:1031px;width:9px;height:10px;background:#8a8a8a"></div>
<div class="a" style="left:1500px;top:858px;width:3px;height:195px;background:#dedede"></div>
<div class="a" style="left:1484px;top:852px;width:4px;height:1px;background:#b4b4b4"></div>
<div class="a" style="left:1517px;top:852px;width:4px;height:1px;background:#b4b4b4"></div>
<div class="a" style="left:1484px;top:874px;width:4px;height:1px;background:#b4b4b4"></div>
<div class="a" style="left:1517px;top:874px;width:4px;height:1px;background:#b4b4b4"></div>
<div class="a" style="left:1484px;top:895px;width:4px;height:1px;background:#b4b4b4"></div>
<div class="a" style="left:1517px;top:895px;width:4px;height:1px;background:#b4b4b4"></div>
<div class="a" style="left:1484px;top:917px;width:4px;height:1px;background:#b4b4b4"></div>
<div class="a" style="left:1517px;top:917px;width:4px;height:1px;background:#b4b4b4"></div>
<div class="a" style="left:1484px;top:938px;width:4px;height:1px;background:#b4b4b4"></div>
<div class="a" style="left:1517px;top:938px;width:4px;height:1px;background:#b4b4b4"></div>
<div class="a" style="left:1484px;top:960px;width:4px;height:1px;background:#b4b4b4"></div>
<div class="a" style="left:1517px;top:960px;width:4px;height:1px;background:#b4b4b4"></div>
<div class="a" style="left:1484px;top:982px;width:4px;height:1px;background:#b4b4b4"></div>
<div class="a" style="left:1517px;top:982px;width:4px;height:1px;background:#b4b4b4"></div>
<div class="a" style="left:1484px;top:1003px;width:4px;height:1px;background:#b4b4b4"></div>
<div class="a" style="left:1517px;top:1003px;width:4px;height:1px;background:#b4b4b4"></div>
<div class="a" style="left:1484px;top:1025px;width:4px;height:1px;background:#b4b4b4"></div>
<div class="a" style="left:1517px;top:1025px;width:4px;height:1px;background:#b4b4b4"></div>
<div class="a" style="left:1484px;top:1046px;width:4px;height:1px;background:#b4b4b4"></div>
<div class="a" style="left:1517px;top:1046px;width:4px;height:1px;background:#b4b4b4"></div>
<div class="a" style="left:1488px;top:845px;width:30px;height:14px;background:linear-gradient(135deg,#20e030,#22b83c);border-radius:3px;border:1px solid #3ad048"></div>
<div class="a" style="left:1443px;top:872px;width:1px;height:152px;background:#fafafa"></div>
<div class="a" style="left:4px;top:1061px;width:134px;height:18px;background:#22ff22"></div>
<div class="t" style="left:4px;width:134px;text-align:center;top:1061.25px;font-size:14px;line-height:20px;color:#0a4a0a;font-weight:400;">Decoding</div>
<div class="a" style="left:144px;top:1061px;width:71px;height:18px;background:#6699ff;border:1px solid #5a88e0"></div>
<div class="t" style="left:144px;width:71px;text-align:center;top:1061.25px;font-size:14px;line-height:20px;color:#12205a;font-weight:400;">JS8</div>
<div class="a" style="left:221px;top:1061px;width:257px;height:18px;background:#f2f2f2;border:1px solid #c8c8c8;border-bottom:none"></div>
<div class="t" style="left:222px;top:1061.25px;font-size:14px;line-height:20px;color:#222;font-weight:400;">Last Tx: PD4L: @HB HEARTBEAT JO22</div>
<div class="a" style="left:484px;top:1062px;width:987px;height:17px;background:#e2e2e2;border-top:1px solid #cfcfcf"></div>
<div class="a" style="left:485px;top:1062px;width:788px;height:16px;background:linear-gradient(90deg,#00b41e 0%,#00b41e 84%,#66da74 89.6%,#00b41e 95.5%,#00b41e 100%)"></div>
<div class="t" style="left:1474px;top:1061.25px;font-size:14px;line-height:20px;color:#1a1a1a;font-weight:400;">12/15</div>
</body></html>
